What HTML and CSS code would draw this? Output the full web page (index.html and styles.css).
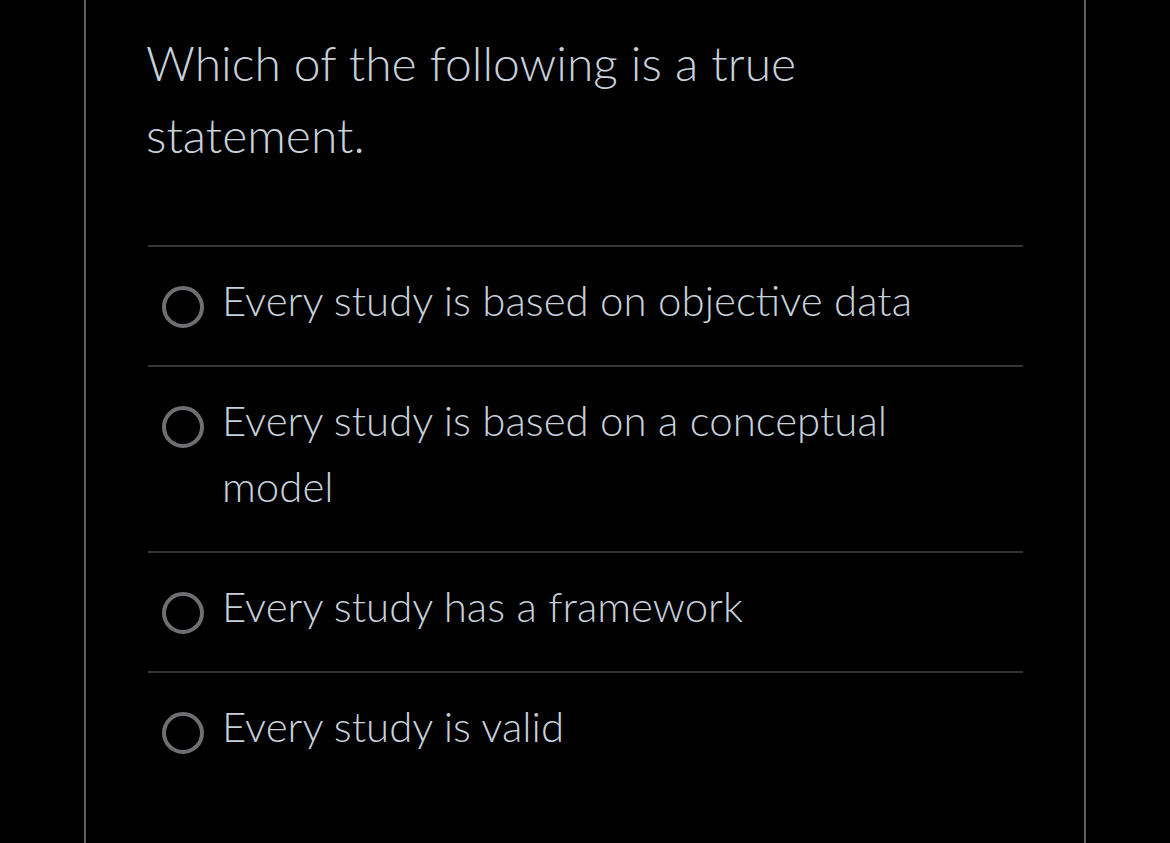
FILE: index.html
```html
<!DOCTYPE html>
<html lang="en">
<head>
<meta charset="utf-8">
<title>Question</title>
<link rel="stylesheet" href="styles.css">
</head>
<body>
<div class="card">
  <div class="question">Which of the following is a true statement.</div>
  <div class="answers">
    <label class="option"><span class="radio"></span><span class="label">Every study is based on objective data</span></label>
    <label class="option"><span class="radio"></span><span class="label">Every study is based on a conceptual model</span></label>
    <label class="option"><span class="radio"></span><span class="label">Every study has a framework</span></label>
    <label class="option last"><span class="radio"></span><span class="label">Every study is valid</span></label>
  </div>
</div>
</body>
</html>
```
FILE: styles.css
```css
html, body {
  margin: 0;
  padding: 0;
  background: #000;
  height: 100%;
}
body {
  font-family: "Lato Light", Lato, "Open Sans", sans-serif;
  font-weight: 300;
  color: #c6d1db;
}
.card {
  margin: 0 84px;
  min-height: 843px;
  box-sizing: border-box;
  border-left: 2px solid #5d5d5d;
  border-right: 2px solid #5d5d5d;
  padding: 27px 61px 0 62px;
}
.question {
  font-size: 48px;
  line-height: 72px;
  width: 700px;
  margin-left: -2px;
}
.answers {
  margin-top: 74px;
  border-top: 2px solid #353535;
}
.option {
  display: flex;
  align-items: flex-start;
  padding: 20px 0 32px 14px;
  border-bottom: 2px solid #353535;
}
.option.last {
  border-bottom: none;
}
.radio {
  flex: none;
  width: 42px;
  height: 42px;
  box-sizing: border-box;
  border: 4px solid #6f6f73;
  border-radius: 50%;
  margin-top: 19px;
  margin-right: 18px;
}
.label {
  font-size: 42px;
  line-height: 66px;
  max-width: 720px;
}
```
